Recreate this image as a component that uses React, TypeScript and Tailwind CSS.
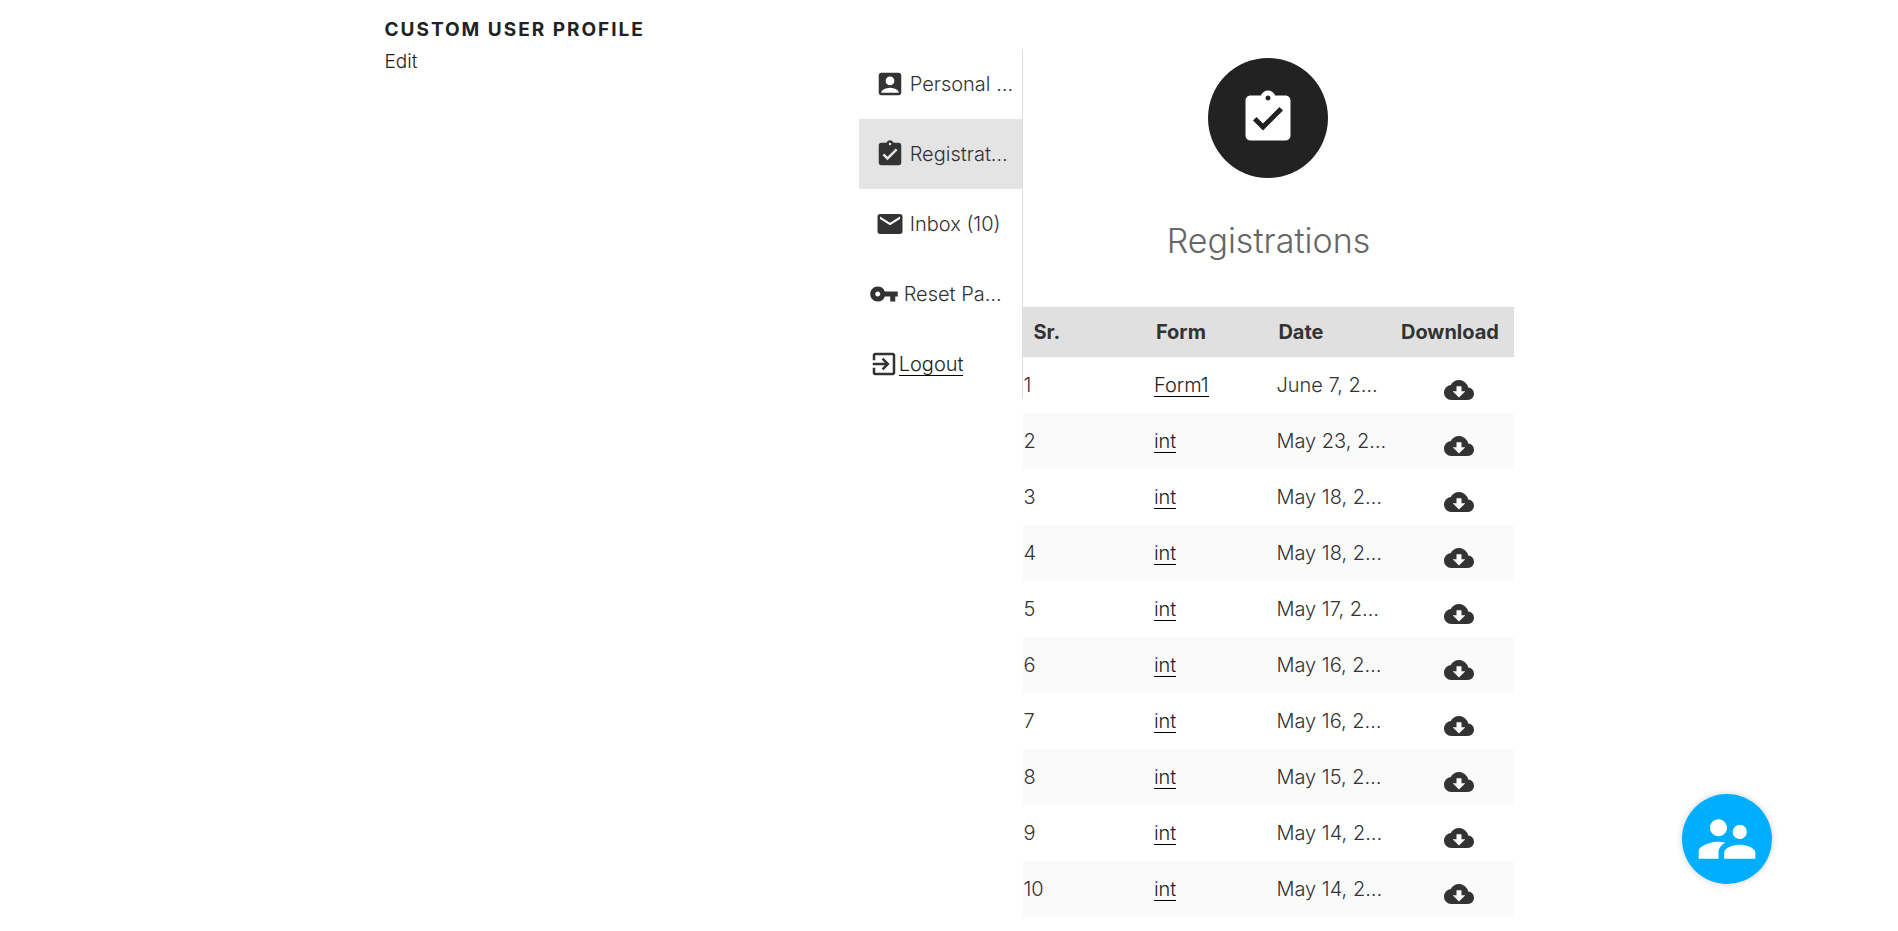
import React, { useState } from "react";
import {
    MdAccountBox,
    MdAssignmentTurnedIn,
    MdCloudDownload,
    MdEmail,
    MdExitToApp,
    MdSupervisorAccount,
    MdVpnKey,
} from "react-icons/md";

interface Registration {
    id: number;
    form: string;
    date: string;
}

const TABS = [
    { id: "personal", label: "Personal …", icon: MdAccountBox, className: "pl-4" },
    { id: "registrations", label: "Registrat…", icon: MdAssignmentTurnedIn, className: "pl-4" },
    { id: "inbox", label: "Inbox (10)", icon: MdEmail, className: "pl-4" },
    { id: "reset", label: "Reset Pa…", icon: MdVpnKey, className: "pl-2.5" },
];

const REGISTRATIONS: Registration[] = [
    { id: 1, form: "Form1", date: "June 7, 2…" },
    { id: 2, form: "int", date: "May 23, 2…" },
    { id: 3, form: "int", date: "May 18, 2…" },
    { id: 4, form: "int", date: "May 18, 2…" },
    { id: 5, form: "int", date: "May 17, 2…" },
    { id: 6, form: "int", date: "May 16, 2…" },
    { id: 7, form: "int", date: "May 16, 2…" },
    { id: 8, form: "int", date: "May 15, 2…" },
    { id: 9, form: "int", date: "May 14, 2…" },
    { id: 10, form: "int", date: "May 14, 2…" },
];

function ProfileNav() {
    const [active, setActive] = useState("registrations");

    return (
        <nav className="box-content w-1/4 shrink-0 self-start border-r border-[#dedede]">
            {TABS.map(({ id, label, icon: Icon, className }) => (
                <button
                    key={id}
                    onClick={() => setActive(id)}
                    className={`flex h-[70px] w-full items-center gap-[5px] whitespace-nowrap text-left ${className} ${
                        active === id ? "bg-[#e4e4e4]" : ""
                    }`}
                >
                    <Icon className="size-[30px] shrink-0" />
                    {label}
                </button>
            ))}
            <div className="flex h-[70px] items-center pl-2.5">
                <MdExitToApp className="size-[30px] shrink-0" />
                <a href="#logout" className="border-b border-black leading-[22px] text-[#222]">Logout</a>
            </div>
        </nav>
    );
}

function RegistrationTable() {
    return (
        <table className="w-full table-fixed border-collapse text-left">
            <thead>
                <tr className="h-[50px] bg-[#e0e0e0]">
                    <th className="px-2.5 font-bold">Sr.</th>
                    <th className="px-2.5 font-bold">Form</th>
                    <th className="px-2.5 font-bold">Date</th>
                    <th className="px-2.5 font-bold">Download</th>
                </tr>
            </thead>
            <tbody>
                {REGISTRATIONS.map((row) => (
                    <tr key={row.id} className="h-14 even:bg-[#fafafa]">
                        <td>{row.id}</td>
                        <td className="px-2">
                            <a
                                href={`#submission-${row.id}`}
                                className="inline-block border-b border-black leading-[22px] text-[#222]"
                            >
                                {row.form}
                            </a>
                        </td>
                        <td className="whitespace-nowrap px-2">{row.date}</td>
                        <td className="pl-3.5">
                            <button aria-label={`Download submission ${row.id}`} className="mx-auto block pt-2.5">
                                <MdCloudDownload className="size-[30px]" />
                            </button>
                        </td>
                    </tr>
                ))}
            </tbody>
        </table>
    );
}

export default function App() {
    return (
        <div className="min-h-screen bg-white font-['Inter','Liberation_Sans',sans-serif] text-xl font-light text-[#333]">
            <div className="mx-auto flex max-w-[1129px] justify-between">
                <header className="pt-4 text-[#222]">
                    <h1 className="text-[19px] font-bold uppercase leading-7 tracking-[2px]">Custom User Profile</h1>
                    <a href="#edit" className="block text-[19px] leading-9">Edit</a>
                </header>

                <main className="flex w-[58%] pt-[49px]">
                    <ProfileNav />
                    <section className="min-w-0 flex-1 pt-[9px]">
                        <div className="mx-auto flex size-[120px] items-center justify-center rounded-full bg-[#222] text-white">
                            <MdAssignmentTurnedIn className="size-[60px]" />
                        </div>
                        <h2 className="mt-10 mb-11 text-center text-[34px] font-light leading-[45px] text-[#666]">
                            Registrations
                        </h2>
                        <RegistrationTable />
                    </section>
                </main>
            </div>

            <button
                aria-label="User menu"
                className="fixed right-[126px] bottom-[47px] flex size-[90px] items-center justify-center rounded-full bg-[#00aeff] text-white shadow-[0_0_6px_rgba(0,0,0,0.2)]"
            >
                <MdSupervisorAccount className="size-[68px]" />
            </button>
        </div>
    );
}
